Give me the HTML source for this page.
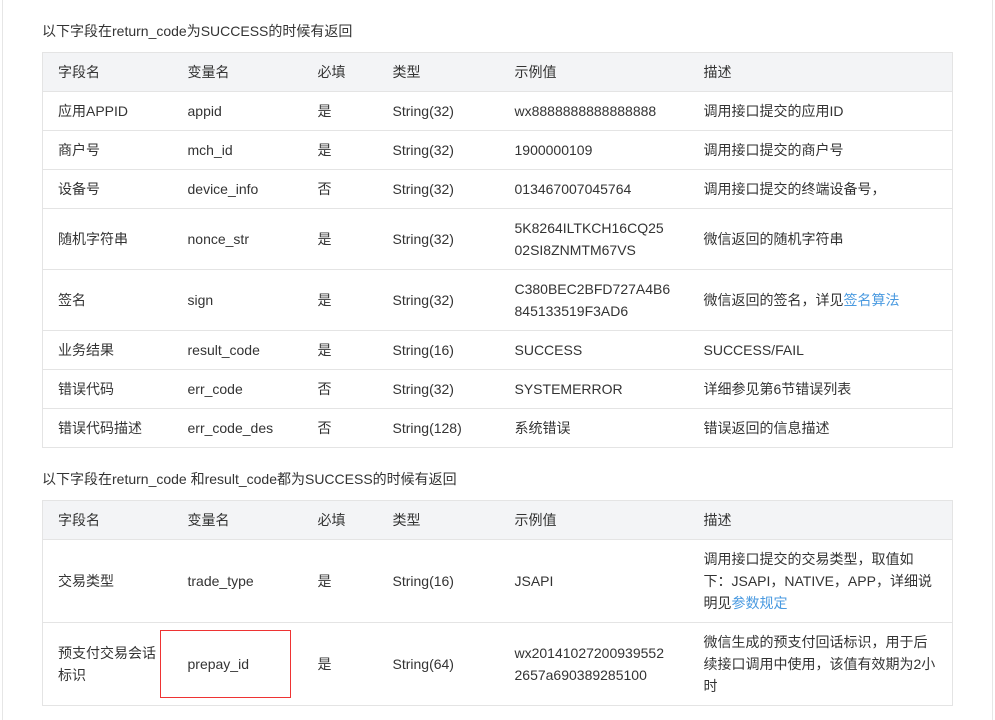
<!DOCTYPE html>
<html><head><meta charset="utf-8"><style>
body{margin:0;width:995px;height:720px;background:#fff;font-family:"Liberation Sans","Noto Sans CJK SC",sans-serif;font-size:14px;color:#333;position:relative;overflow:hidden}
.lb{position:absolute;left:2px;top:0;width:1px;height:720px;background:#e6e6e6}
.rb{position:absolute;left:992px;top:0;width:1px;height:720px;background:#e6e6e6}
.t{position:absolute;left:42px;font-size:14px}
table{position:absolute;left:42px;width:911px;border-collapse:collapse;border:1px solid #e4e4e4;table-layout:fixed}
td{border-top:1px solid #e4e4e4;padding:0 0 0 15px;line-height:22px;vertical-align:middle;box-sizing:border-box;white-space:nowrap}
tr.h td{background:#f3f4f6}
a{color:#4a9ae0;text-decoration:none}
.red{position:absolute;left:160px;top:630px;width:129px;height:66px;border:1px solid #e33}
</style></head><body>
<div class="lb"></div><div class="rb"></div>
<div class="t" style="top:21px">以下字段在return_code为SUCCESS的时候有返回</div>
<table style="top:52px">
<colgroup><col style="width:130px"><col style="width:130px"><col style="width:75px"><col style="width:122px"><col style="width:189px"><col></colgroup>
<tr class="h" style="height:39px"><td>字段名</td><td>变量名</td><td>必填</td><td>类型</td><td>示例值</td><td>描述</td></tr>
<tr style="height:39px"><td>应用APPID</td><td>appid</td><td>是</td><td>String(32)</td><td>wx8888888888888888</td><td>调用接口提交的应用ID</td></tr>
<tr style="height:39px"><td>商户号</td><td>mch_id</td><td>是</td><td>String(32)</td><td>1900000109</td><td>调用接口提交的商户号</td></tr>
<tr style="height:39px"><td>设备号</td><td>device_info</td><td>否</td><td>String(32)</td><td>013467007045764</td><td>调用接口提交的终端设备号，</td></tr>
<tr style="height:61px"><td>随机字符串</td><td>nonce_str</td><td>是</td><td>String(32)</td><td>5K8264ILTKCH16CQ25<br>02SI8ZNMTM67VS</td><td>微信返回的随机字符串</td></tr>
<tr style="height:61px"><td>签名</td><td>sign</td><td>是</td><td>String(32)</td><td>C380BEC2BFD727A4B6<br>845133519F3AD6</td><td>微信返回的签名，详见<a>签名算法</a></td></tr>
<tr style="height:39px"><td>业务结果</td><td>result_code</td><td>是</td><td>String(16)</td><td>SUCCESS</td><td>SUCCESS/FAIL</td></tr>
<tr style="height:39px"><td>错误代码</td><td>err_code</td><td>否</td><td>String(32)</td><td>SYSTEMERROR</td><td>详细参见第6节错误列表</td></tr>
<tr style="height:39px"><td>错误代码描述</td><td>err_code_des</td><td>否</td><td>String(128)</td><td>系统错误</td><td>错误返回的信息描述</td></tr>
</table>
<div class="t" style="top:469px">以下字段在return_code 和result_code都为SUCCESS的时候有返回</div>
<table style="top:500px">
<colgroup><col style="width:130px"><col style="width:130px"><col style="width:75px"><col style="width:122px"><col style="width:189px"><col></colgroup>
<tr class="h" style="height:39px"><td>字段名</td><td>变量名</td><td>必填</td><td>类型</td><td>示例值</td><td>描述</td></tr>
<tr style="height:83px"><td>交易类型</td><td>trade_type</td><td>是</td><td>String(16)</td><td>JSAPI</td><td>调用接口提交的交易类型，取值如<br>下：JSAPI，NATIVE，APP，详细说<br>明见<a>参数规定</a></td></tr>
<tr style="height:83px"><td>预支付交易会话<br>标识</td><td>prepay_id</td><td>是</td><td>String(64)</td><td>wx20141027200939552<br>2657a690389285100</td><td>微信生成的预支付回话标识，用于后<br>续接口调用中使用，该值有效期为2小<br>时</td></tr>
</table>
<div class="red"></div>
</body></html>
